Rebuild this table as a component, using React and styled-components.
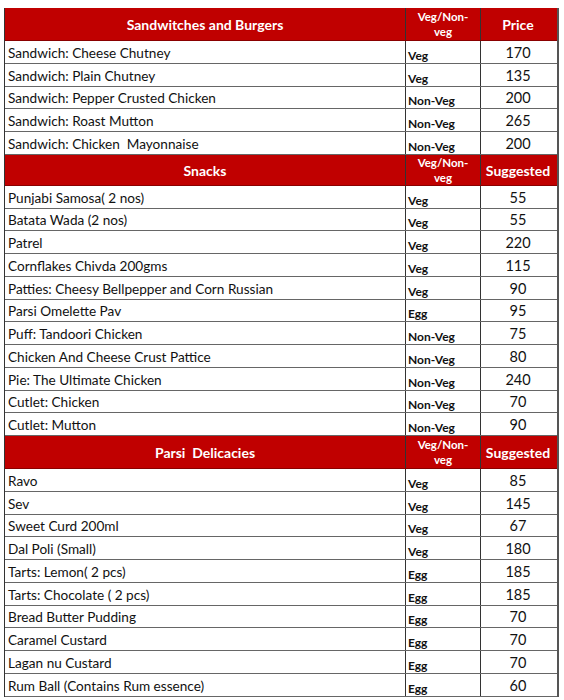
import styled, { createGlobalStyle } from "styled-components";

const GlobalStyle = createGlobalStyle`
  body {
    margin: 0;
    background: #fff;
    font-family: Lato, "Open Sans", sans-serif;
  }
`;

const Page = styled.div`
  padding: 8px 0 0 4px;
`;

const Sheet = styled.div`
  width: 552px;
  border-left: 1px solid #333;
  border-right: 2px solid #555;
`;

const Row = styled.div`
  display: grid;
  grid-template-columns: 401px 75px 74px;
  height: ${(p) => p.$h || 22.75}px;
  border-bottom: 1px solid #666;
  box-sizing: border-box;
`;

const HeadRow = styled(Row)`
  background: #c00000;
  color: #fff;
  font-weight: 700;
  border-bottom: 1px solid #8a0000;
`;

const HeadCell = styled.div`
  display: flex;
  align-items: center;
  justify-content: center;
  text-align: center;
  white-space: ${(p) => (p.$small ? "normal" : "pre")};
  font-size: ${(p) => (p.$small ? 11.5 : 14)}px;
  line-height: ${(p) => (p.$small ? 15 : 16)}px;
  border-right: ${(p) => (p.$last ? "none" : "1px solid #333")};
  padding-top: ${(p) => (p.$small ? 0 : 2)}px;
`;

const NameCell = styled.div`
  display: flex;
  align-items: flex-end;
  padding: 0 0 2px 3px;
  font-size: 13.6px;
  color: #111;
  border-right: 1px solid #333;
  white-space: pre;
`;

const TypeCell = styled.div`
  display: flex;
  align-items: flex-end;
  padding: 0 0 0 2px;
  font-size: 12px;
  font-weight: 700;
  color: #111;
  border-right: 1px solid #333;
`;

const PriceCell = styled.div`
  display: flex;
  align-items: flex-end;
  justify-content: center;
  padding-bottom: 2px;
  font-size: 14.5px;
  color: #111;
`;

const sections = [
  {
    title: "Sandwitches and Burgers",
    last: "Price",
    h: 33,
    items: [
      ["Sandwich: Cheese Chutney", "Veg", 170],
      ["Sandwich: Plain Chutney", "Veg", 135],
      ["Sandwich: Pepper Crusted Chicken", "Non-Veg", 200],
      ["Sandwich: Roast Mutton", "Non-Veg", 265],
      ["Sandwich: Chicken  Mayonnaise", "Non-Veg", 200],
    ],
  },
  {
    title: "Snacks",
    last: "Suggested",
    h: 31,
    items: [
      ["Punjabi Samosa( 2 nos)", "Veg", 55],
      ["Batata Wada (2 nos)", "Veg", 55],
      ["Patrel", "Veg", 220],
      ["Cornflakes Chivda 200gms", "Veg", 115],
      ["Patties: Cheesy Bellpepper and Corn Russian", "Veg", 90],
      ["Parsi Omelette Pav", "Egg", 95],
      ["Puff: Tandoori Chicken", "Non-Veg", 75],
      ["Chicken And Cheese Crust Pattice", "Non-Veg", 80],
      ["Pie: The Ultimate Chicken", "Non-Veg", 240],
      ["Cutlet: Chicken", "Non-Veg", 70],
      ["Cutlet: Mutton", "Non-Veg", 90],
    ],
  },
  {
    title: "Parsi  Delicacies",
    last: "Suggested",
    h: 33,
    items: [
      ["Ravo", "Veg", 85],
      ["Sev", "Veg", 145],
      ["Sweet Curd 200ml", "Veg", 67],
      ["Dal Poli (Small)", "Veg", 180],
      ["Tarts: Lemon( 2 pcs)", "Egg", 185],
      ["Tarts: Chocolate ( 2 pcs)", "Egg", 185],
      ["Bread Butter Pudding", "Egg", 70],
      ["Caramel Custard", "Egg", 70],
      ["Lagan nu Custard", "Egg", 70],
      ["Rum Ball (Contains Rum essence)", "Egg", 60],
    ],
  },
];

const App = () => {
  return (
    <Page>
      <GlobalStyle />
      <Sheet>
        {sections.map((s) => (
          <div key={s.title}>
            <HeadRow $h={s.h}>
              <HeadCell>{s.title}</HeadCell>
              <HeadCell $small>
                Veg/Non-
                <br />
                veg
              </HeadCell>
              <HeadCell $last>{s.last}</HeadCell>
            </HeadRow>
            {s.items.map(([name, type, price]) => (
              <Row key={name}>
                <NameCell>{name}</NameCell>
                <TypeCell>{type}</TypeCell>
                <PriceCell>{price}</PriceCell>
              </Row>
            ))}
          </div>
        ))}
      </Sheet>
    </Page>
  );
};

export default App;
